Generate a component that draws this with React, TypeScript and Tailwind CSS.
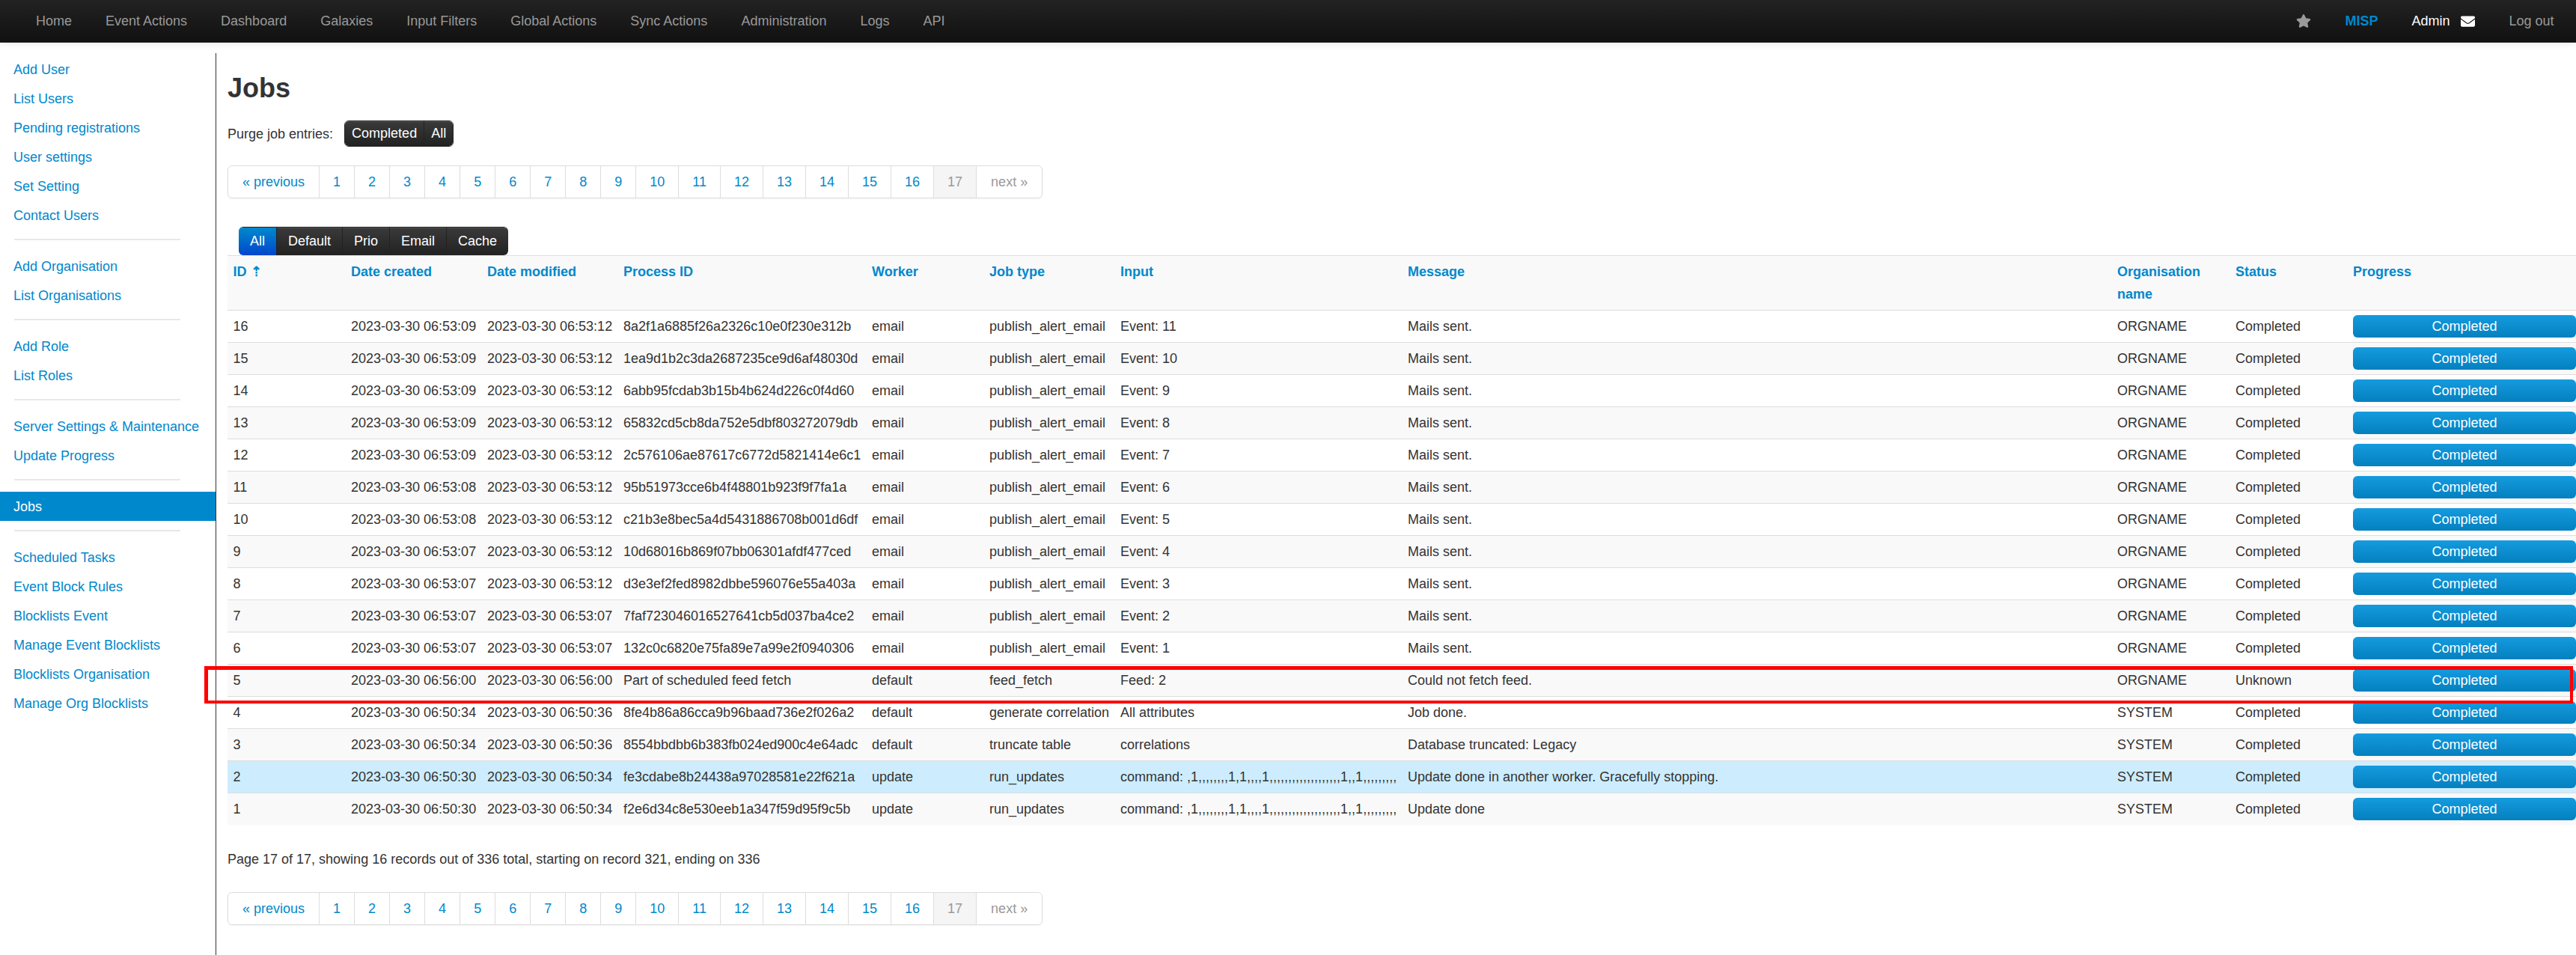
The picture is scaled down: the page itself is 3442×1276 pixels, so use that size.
import { FaEnvelope, FaStar } from 'react-icons/fa';

const navLeft = ['Home', 'Event Actions', 'Dashboard', 'Galaxies', 'Input Filters', 'Global Actions', 'Sync Actions', 'Administration', 'Logs', 'API'];

type SideEntry = { label?: string; active?: boolean; divider?: boolean };

const sideItems: SideEntry[] = [
  { label: 'Add User' },
  { label: 'List Users' },
  { label: 'Pending registrations' },
  { label: 'User settings' },
  { label: 'Set Setting' },
  { label: 'Contact Users' },
  { divider: true },
  { label: 'Add Organisation' },
  { label: 'List Organisations' },
  { divider: true },
  { label: 'Add Role' },
  { label: 'List Roles' },
  { divider: true },
  { label: 'Server Settings & Maintenance' },
  { label: 'Update Progress' },
  { divider: true },
  { label: 'Jobs', active: true },
  { divider: true },
  { label: 'Scheduled Tasks' },
  { label: 'Event Block Rules' },
  { label: 'Blocklists Event' },
  { label: 'Manage Event Blocklists' },
  { label: 'Blocklists Organisation' },
  { label: 'Manage Org Blocklists' },
];

const commands = 'command: ,1,,,,,,,,1,1,,,,1,,,,,,,,,,,,,,,,,,,1,,1,,,,,,,,,';

const columns = [
  { label: 'ID ⇡', width: 'w-[157.5px]' },
  { label: 'Date created', width: 'w-[182px]' },
  { label: 'Date modified', width: 'w-[182px]' },
  { label: 'Process ID', width: 'w-[332px]' },
  { label: 'Worker', width: 'w-[157px]' },
  { label: 'Job type', width: 'w-[175px]' },
  { label: 'Input', width: 'w-[384px]' },
  { label: 'Message', width: 'w-[948px]' },
  { label: 'Organisation name', width: 'w-[158px]' },
  { label: 'Status', width: 'w-[157px]' },
  { label: 'Progress', width: 'w-[313px]' },
];

const jobs = [
  [16, '06:53:09', '06:53:12', '8a2f1a6885f26a2326c10e0f230e312b', 'email', 'publish_alert_email', 'Event: 11', 'Mails sent.', 'ORGNAME', 'Completed'],
  [15, '06:53:09', '06:53:12', '1ea9d1b2c3da2687235ce9d6af48030d', 'email', 'publish_alert_email', 'Event: 10', 'Mails sent.', 'ORGNAME', 'Completed'],
  [14, '06:53:09', '06:53:12', '6abb95fcdab3b15b4b624d226c0f4d60', 'email', 'publish_alert_email', 'Event: 9', 'Mails sent.', 'ORGNAME', 'Completed'],
  [13, '06:53:09', '06:53:12', '65832cd5cb8da752e5dbf803272079db', 'email', 'publish_alert_email', 'Event: 8', 'Mails sent.', 'ORGNAME', 'Completed'],
  [12, '06:53:09', '06:53:12', '2c576106ae87617c6772d5821414e6c1', 'email', 'publish_alert_email', 'Event: 7', 'Mails sent.', 'ORGNAME', 'Completed'],
  [11, '06:53:08', '06:53:12', '95b51973cce6b4f48801b923f9f7fa1a', 'email', 'publish_alert_email', 'Event: 6', 'Mails sent.', 'ORGNAME', 'Completed'],
  [10, '06:53:08', '06:53:12', 'c21b3e8bec5a4d5431886708b001d6df', 'email', 'publish_alert_email', 'Event: 5', 'Mails sent.', 'ORGNAME', 'Completed'],
  [9, '06:53:07', '06:53:12', '10d68016b869f07bb06301afdf477ced', 'email', 'publish_alert_email', 'Event: 4', 'Mails sent.', 'ORGNAME', 'Completed'],
  [8, '06:53:07', '06:53:12', 'd3e3ef2fed8982dbbe596076e55a403a', 'email', 'publish_alert_email', 'Event: 3', 'Mails sent.', 'ORGNAME', 'Completed'],
  [7, '06:53:07', '06:53:07', '7faf723046016527641cb5d037ba4ce2', 'email', 'publish_alert_email', 'Event: 2', 'Mails sent.', 'ORGNAME', 'Completed'],
  [6, '06:53:07', '06:53:07', '132c0c6820e75fa89e7a99e2f0940306', 'email', 'publish_alert_email', 'Event: 1', 'Mails sent.', 'ORGNAME', 'Completed'],
  [5, '06:56:00', '06:56:00', 'Part of scheduled feed fetch', 'default', 'feed_fetch', 'Feed: 2', 'Could not fetch feed.', 'ORGNAME', 'Unknown'],
  [4, '06:50:34', '06:50:36', '8fe4b86a86cca9b96baad736e2f026a2', 'default', 'generate correlation', 'All attributes', 'Job done.', 'SYSTEM', 'Completed'],
  [3, '06:50:34', '06:50:36', '8554bbdbb6b383fb024ed900c4e64adc', 'default', 'truncate table', 'correlations', 'Database truncated: Legacy', 'SYSTEM', 'Completed'],
  [2, '06:50:30', '06:50:34', 'fe3cdabe8b24438a97028581e22f621a', 'update', 'run_updates', commands, 'Update done in another worker. Gracefully stopping.', 'SYSTEM', 'Completed'],
  [1, '06:50:30', '06:50:34', 'f2e6d34c8e530eeb1a347f59d95f9c5b', 'update', 'run_updates', commands, 'Update done', 'SYSTEM', 'Completed'],
];

const pages = ['1', '2', '3', '4', '5', '6', '7', '8', '9', '10', '11', '12', '13', '14', '15', '16'];

const darkBtn = 'bg-linear-to-b from-[#3a3a3a] to-[#222222] text-white shadow-[inset_0_1px_0_rgba(255,255,255,0.15)]';

function Pagination() {
  return (
    <div className="flex h-[44px] w-fit rounded-[6px] border border-[#dddddd] shadow-[0_1px_2px_rgba(0,0,0,0.05)] text-[#0088cc] overflow-hidden">
      <span className="px-[19px] leading-[42px] border-r border-[#dddddd]">« previous</span>
      {pages.map((p) => (
        <span key={p} className="px-[18px] leading-[42px] border-r border-[#dddddd]">{p}</span>
      ))}
      <span className="px-[18px] leading-[42px] border-r border-[#dddddd] bg-[#f5f5f5] text-[#999999]">17</span>
      <span className="px-[19px] leading-[42px] text-[#999999]">next »</span>
    </div>
  );
}

function Sidebar() {
  return (
    <div className="w-[289px] shrink-0 border-r border-[#333333] pt-[2px]">
      {sideItems.map((item, i) =>
        item.divider ? (
          <div key={i} className="h-[29px] pt-[12px]">
            <div className="ml-[19px] w-[222px] h-[2px] bg-[#e8e8e8]" />
          </div>
        ) : (
          <div
            key={i}
            className={
              item.active
                ? 'py-[4.5px] pl-[18px] pr-[18px] bg-[#0088cc] text-white'
                : 'py-[4.5px] pl-[18px] pr-[18px] text-[#0088cc]'
            }
          >
            {item.label}
          </div>
        )
      )}
    </div>
  );
}

export default function App() {
  return (
    <div className="relative w-[3442px] h-[1276px] overflow-hidden bg-white font-['Liberation_Sans',Arial,sans-serif] text-[18px] leading-[30px] text-[#333333]">
      <div className="flex h-[57px] items-center justify-between bg-linear-to-b from-[#222222] to-[#111111] border-b border-[#252525] shadow-[0_1px_10px_rgba(0,0,0,0.1)] pl-[25.5px] pr-[7px]">
        <div className="flex">
          {navLeft.map((n) => (
            <span key={n} className="px-[22.5px] text-[#999999]">{n}</span>
          ))}
        </div>
        <div className="flex items-center">
          <FaStar className="text-[#999999] w-[20px] h-[18px]" />
          <span className="ml-[45px] font-bold text-[#0088cc]">MISP</span>
          <span className="ml-[45px] text-white">Admin</span>
          <FaEnvelope className="ml-[15px] text-white w-[19px] h-[19px]" />
          <span className="ml-[45px] px-[0px] mr-[22.5px] text-[#999999]">Log out</span>
        </div>
      </div>

      <div className="flex mt-[14px] h-[1205px]">
        <Sidebar />
        <div className="flex-1 min-w-0 pl-[15px]">
          <h2 className="mt-[17px] text-[36px] leading-[60px] font-bold">Jobs</h2>

          <div className="mt-[13px] flex items-center h-[35px] gap-[15px]">
            <span>Purge job entries:</span>
            <div className="flex h-[35px] rounded-[6px] overflow-hidden border border-[#222222]">
              <span className={`${darkBtn} px-[9px] leading-[33px] border-r border-[#222222]`}>Completed</span>
              <span className={`${darkBtn} px-[9px] leading-[33px]`}>All</span>
            </div>
          </div>

          <div className="mt-[25px]">
            <Pagination />
          </div>

          <div className="mt-[38px] ml-[15px] flex w-fit h-[38px] rounded-t-[6px] rounded-b-[6px] overflow-hidden border-t border-[#222222] text-white">
            <span className="px-[15px] leading-[36px] bg-linear-to-b from-[#0088cc] to-[#0044cc]">All</span>
            {['Default', 'Prio', 'Email', 'Cache'].map((t) => (
              <span key={t} className={`${darkBtn} px-[15px] leading-[36px] border-l border-[#222222]`}>{t}</span>
            ))}
          </div>

          <table className="table-fixed border-collapse w-[3145.5px] max-w-none">
            <thead>
              <tr className="bg-[#f9f9f9]">
                {columns.map((c) => (
                  <th key={c.label} className={`${c.width} border-t border-[#dddddd] px-[7.5px] py-[6px] text-left align-top font-bold text-[#0088cc]`}>
                    {c.label}
                  </th>
                ))}
              </tr>
            </thead>
            <tbody>
              {jobs.map((j, i) => {
                const id = j[0] as number;
                const bg = id === 2 ? 'bg-[#cdedfe]' : i % 2 === 1 ? 'bg-[#f9f9f9]' : 'bg-white';
                return (
                  <tr key={id} className={bg}>
                    <td className="border-t border-[#dddddd] px-[7.5px] py-[6px]">{id}</td>
                    <td className="border-t border-[#dddddd] px-[7.5px] py-[6px] whitespace-nowrap">2023-03-30 {j[1]}</td>
                    <td className="border-t border-[#dddddd] px-[7.5px] py-[6px] whitespace-nowrap">2023-03-30 {j[2]}</td>
                    {[j[3], j[4], j[5], j[6], j[7], j[8], j[9]].map((cell, k) => (
                      <td key={k} className="border-t border-[#dddddd] px-[7.5px] py-[6px] whitespace-nowrap overflow-hidden">{cell}</td>
                    ))}
                    <td className="border-t border-[#dddddd] px-[7.5px] py-[6px]">
                      <div className="h-[30px] rounded-[6px] bg-linear-to-b from-[#149bdf] to-[#0480be] text-center text-white">Completed</div>
                    </td>
                  </tr>
                );
              })}
            </tbody>
          </table>

          <p className="mt-[31px]">Page 17 of 17, showing 16 records out of 336 total, starting on record 321, ending on 336</p>

          <div className="mt-[29px]">
            <Pagination />
          </div>
        </div>
      </div>

      <div className="absolute left-[273px] top-[890px] w-[3165px] h-[50px] border-t-[5px] border-l-[5px] border-r-[4px] border-b-[4px] border-[#ff0000]" />
    </div>
  );
}
